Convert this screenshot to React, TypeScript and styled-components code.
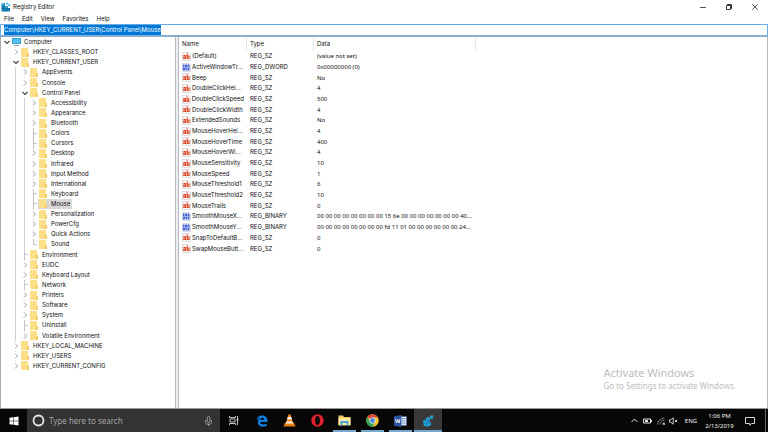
import React, { useEffect, useRef, useState } from "react";
import styled, { createGlobalStyle, css } from "styled-components";

const uiFont = `Inter, "Open Sans", sans-serif`;
const textFont = `"Noto Sans", "Open Sans", sans-serif`;

const GlobalStyle = createGlobalStyle`
  *, *::before, *::after { box-sizing: border-box; }
  body { margin: 0; background: #fff; color: #101010; font: 6px/10px ${uiFont}; overflow: hidden; }
  button, input { font: inherit; color: inherit; border: 0; padding: 0; margin: 0; background: none; }
  svg { display: block; }
  ul { list-style: none; margin: 0; padding: 0; }
`;

const Desktop = styled.div`
  display: flex;
  flex-direction: column;
  height: 100vh;
`;

const Window = styled.main`
  position: relative;
  display: flex;
  flex: 1;
  flex-direction: column;
  min-height: 0;
  border-bottom: 1px solid #9a9a9a;
`;

const TitleBar = styled.header`
  display: flex;
  align-items: center;
  height: 13px;
  padding-left: 1px;
  gap: 2px;
`;

const Title = styled.h1`
  flex: 1;
  margin: 0;
  font: inherit;
`;

const WindowButtons = styled.div`
  display: flex;
`;

const WindowButton = styled.button`
  display: grid;
  place-items: center;
  width: 26px;
  height: 12px;
`;

const MenuBar = styled.nav`
  display: flex;
  align-items: center;
  height: 11px;
  padding-left: 4px;
  gap: 8px;
`;

const AddressBar = styled.div`
  display: flex;
  height: 13px;
  padding: 0 3px;
  align-items: center;
  border: 1px solid #6aaae2;
  border-bottom: 2px solid #86aed0;
`;

const AddressInput = styled.input`
  flex: 1;
  height: 10px;
  line-height: 10px;
  outline: none;
  &::selection {
    background: #0078d7;
    color: #fff;
  }
`;

const Panes = styled.div`
  display: flex;
  flex: 1;
  min-height: 0;
`;

const TreePane = styled.section`
  flex: 0 0 176px;
  overflow: hidden;
  border-left: 1px solid #a5a9b5;
  border-right: 1px solid #b4b7c0;
`;

const Splitter = styled.div`
  width: 2px;
  background: #ededf0;
`;

const ListPane = styled.section`
  flex: 1;
  min-width: 0;
  overflow: hidden;
  border-left: 1px solid #b4b7c0;
  border-right: 1px solid #b4b7c0;
`;

const Tree = styled.ul`
  display: grid;
  grid-auto-rows: 1fr;
  min-height: 334px;
  padding-left: 1px;
`;

const TreeRow = styled.li`
  display: flex;
  align-items: stretch;
`;

type GuideKind = "line" | "tee" | "corner" | "dots" | "none";

const guideStyles = {
  none: css``,
  line: css`
    background: linear-gradient(#d2d2d2, #d2d2d2) 4px 0 / 1px 100% no-repeat;
  `,
  tee: css`
    background:
      linear-gradient(#c4c4c4, #c4c4c4) 4px 0 / 1px 100% no-repeat,
      linear-gradient(#c4c4c4, #c4c4c4) 4px 50% / 4px 1px no-repeat;
  `,
  corner: css`
    background:
      linear-gradient(#c4c4c4, #c4c4c4) 4px 0 / 1px 50% no-repeat,
      linear-gradient(#c4c4c4, #c4c4c4) 4px 50% / 4px 1px no-repeat;
  `,
  dots: css`
    background: linear-gradient(#dcdcdc, #dcdcdc) 4px 0 / 1px 1px no-repeat;
  `,
};

const Guide = styled.span<{ $kind: GuideKind }>`
  display: grid;
  place-items: center;
  width: 9px;
  ${(p) => guideStyles[p.$kind]}
`;

const Toggle = styled.button`
  display: grid;
  place-items: center;
  width: 9px;
  height: 9px;
`;

const TreeNode = styled.button<{ $selected: boolean }>`
  display: flex;
  align-items: center;
  gap: 3px;
  padding: 0 2px 0 1px;
  white-space: nowrap;
  background: ${(p) => (p.$selected ? "#d9d9d9" : "transparent")};
`;

const NodeIcon = styled.span`
  display: flex;
  width: 9px;
`;

const ValueTable = styled.table`
  width: 297px;
  height: 217px;
  table-layout: fixed;
  border-collapse: separate;
  border-spacing: 0;
`;

const HeadCell = styled.th<{ $width: number }>`
  width: ${(p) => p.$width}px;
  height: 14px;
  padding: 0 3px;
  font-weight: 400;
  text-align: left;
  border-right: 1px solid #e6e6e6;
`;

const Cell = styled.td`
  padding: 0 3px;
  white-space: nowrap;
`;

const DataCell = styled(Cell)`
  font-family: ${textFont};
`;

const NameContent = styled.span`
  display: flex;
  align-items: center;
  gap: 1px;
`;

const Watermark = styled.aside`
  position: absolute;
  right: 32px;
  bottom: 17px;
  color: #bdbdbd;
  font: 8px/11px ${textFont};
`;

const WatermarkTitle = styled.strong`
  display: block;
  font-weight: 400;
  font-size: 11px;
  line-height: 14px;
`;

const Taskbar = styled.footer`
  display: flex;
  height: 23px;
  background: #070707;
  color: #f2f2f2;
`;

const StartButton = styled.button`
  display: grid;
  place-items: center;
  width: 27px;
`;

const SearchBox = styled.label`
  display: flex;
  align-items: center;
  width: 193px;
  padding: 0 8px 0 5px;
  gap: 4px;
  background: #333;
`;

const SearchInput = styled.input`
  flex: 1;
  min-width: 0;
  font: 8px/12px ${textFont};
  outline: none;
  &::placeholder {
    color: #a6a6a6;
    opacity: 1;
  }
`;

const TaskButton = styled.button`
  display: grid;
  place-items: center;
  width: 28px;
`;

const Apps = styled.div`
  display: grid;
  grid-template-columns: repeat(7, 1fr);
  width: 194px;
`;

const AppButton = styled.button<{ $state: "idle" | "open" | "active" }>`
  display: grid;
  place-items: center;
  background-color: ${(p) => (p.$state === "active" ? "#383838" : "transparent")};
  background-image: ${(p) => (p.$state === "idle" ? "none" : "linear-gradient(#76a9d0, #76a9d0)")};
  background-repeat: no-repeat;
  background-position: center bottom;
  background-size: ${(p) => (p.$state === "active" ? "100%" : "23px")} 2px;
`;

const Tray = styled.div`
  display: flex;
  align-items: center;
  margin-left: auto;
  font-family: ${textFont};
`;

const TrayButton = styled.button`
  display: grid;
  place-items: center;
  width: 13px;
  height: 23px;
`;

const Language = styled(TrayButton)`
  width: 22px;
`;

const Clock = styled.button`
  width: 35px;
  line-height: 10px;
  text-align: center;
`;

const ActionCenter = styled(TrayButton)`
  width: 25px;
  margin-right: 3px;
`;

const ShowDesktop = styled.button`
  width: 3px;
  height: 23px;
  border-left: 1px solid #6a6a6a;
`;

/* ---------- icons ---------- */

const RegistryIcon = ({ size = 10, dark = false }: { size?: number; dark?: boolean }) => (
  <svg width={size} height={size} viewBox="0 0 20 20" aria-hidden="true">
    {dark ? (
      <>
        <path d="M2 9l5-2 4 2v4l4-1v5l-6 3-6-3z" fill="#1786bd" />
        <path d="M2 9l5 2v8l-4-2zM9 12l6-1v5l-6 3z" fill="#29a9e0" />
        <path d="M7 5l3-2 3 2v4l-3 1-3-1zM13 2l4-2 2 3-2 4-3-1z" fill="#2cb2e8" />
        <path d="M10 5v5M2 13l5 2M9 15l6-2M14 3l4 1" stroke="#0b5d8c" strokeWidth="1" />
      </>
    ) : (
      <>
        <path d="M1 3h7v5h5v4h5v7H1z" fill="#1583b8" />
        <path d="M1 3h7v5H1zM8 8h5v5H8z" fill="#3db0dc" />
        <path d="M1 8h7M1 13h17M7 3v16M12.500 8v11" stroke="#0b618f" />
        <path d="M10 2l4-1 1 4-4 1zM15 4l4 1-1 4-4-1z" fill="#4fc3ea" />
      </>
    )}
  </svg>
);

const FolderIcon = () => (
  <svg width="8" height="9" viewBox="0 0 8 9" aria-hidden="true">
    <path d="M0 0h7v5h1v4H0z" fill="#fcdf86" />
    <path d="M6 5h2v4H6z" fill="#f2cd68" />
  </svg>
);

const ComputerIcon = () => (
  <svg width="9" height="8" viewBox="0 0 9 8" aria-hidden="true">
    <path d="M0 0h9v6H0z" fill="#3d9fd3" />
    <path d="M1 1h7v4H1z" fill="#53c0f0" />
    <path d="M2 7h5v1H2z" fill="#8aa7b8" />
  </svg>
);

const Chevron = ({ open }: { open: boolean }) => (
  <svg width="6" height="6" viewBox="0 0 6 6" fill="none" aria-hidden="true">
    {open ? (
      <path d="M.5 2L3 4.500 5.500 2" stroke="#444" strokeWidth="1.100" />
    ) : (
      <path d="M2 .5L4.500 3 2 5.500" stroke="#9c9c9c" />
    )}
  </svg>
);

const ValueIcon = ({ binary }: { binary: boolean }) => (
  <svg width="9" height="9" viewBox="0 0 18 18" fill="none" aria-hidden="true">
    <path d="M1 1h13l3 3v13H1z" fill="#fbfbfb" stroke="#cfcfcf" strokeWidth="1.500" />
    {binary ? (
      <g fill="#3f63dc">
        <path d="M2 3h3v5H2zM6 3h4v5H6zM11 3h4v5h-4zM2 10h4v5H2zM7 10h3v5H7zM11 10h4v5h-4z" />
        <path d="M1 8h15v2H1z" opacity=".5" />
      </g>
    ) : (
      <g stroke="#e2482a" strokeWidth="2.400">
        <path d="M2.500 7H7v6H3.500v-3H7M10.500 3v10H14V8h-3.500" />
      </g>
    )}
  </svg>
);

const WindowsLogo = () => (
  <svg width="10" height="10" viewBox="0 0 20 20" fill="#fff" aria-hidden="true">
    <path d="M1 3.500l7.500-1v7H1zM9.500 2.300L19 1v8.500H9.500zM1 10.500h7.500v7L1 16.500zM9.500 10.500H19V19l-9.500-1.300z" />
  </svg>
);

const CortanaIcon = () => (
  <svg width="13" height="13" viewBox="0 0 13 13" fill="none" aria-hidden="true">
    <circle cx="6.500" cy="6.500" r="5" stroke="#e6e6e6" strokeWidth="1.800" />
  </svg>
);

const MicIcon = () => (
  <svg width="7" height="10" viewBox="0 0 7 10" fill="none" stroke="#a9a9a9" strokeWidth=".9" aria-hidden="true">
    <rect x="2.200" y=".5" width="2.600" height="6" rx="1.200" />
    <path d="M.6 4v2.500c0 1 .8 1.700 1.700 1.700h2.400c1 0 1.700-.7 1.700-1.700V4M3.500 8.200V10" />
  </svg>
);

const TaskViewIcon = () => (
  <svg width="10" height="9" viewBox="0 0 10 9" fill="none" stroke="#d8d8d8" aria-hidden="true">
    <path d="M.5 0v1.500h6V0M.5 9V7.500h6V9M1 3h5v3H1zM8.500 0v9" strokeWidth=".9" />
    <path d="M7.700 3.500h1.600" strokeWidth="2" />
  </svg>
);

const EdgeIcon = () => (
  <svg width="12" height="12" viewBox="0 0 24 24" aria-hidden="true">
    <path
      d="M1 11C2 4 6.500 1 12 1c7 0 11 5 11 10v3H8.500c.3 3.500 3.200 5 6.500 5 2.500 0 4.500-.6 6.500-1.800v4.500C19.500 23 17 23.500 14 23.500 7.500 23.500 3.500 20 3.500 14.500c0-4 2-7 5.500-8.500C6 6.300 3 8 1 11zm7.500-1.500h8C16.500 7 15 5.500 12.700 5.500S9 7 8.500 9.500z"
      fill="#0f7fe0"
    />
  </svg>
);

const VlcIcon = () => (
  <svg width="13" height="13" viewBox="0 0 26 26" aria-hidden="true">
    <path d="M4 17h18l3 8H1z" fill="#e07b12" />
    <path d="M11 1h4l6 20H5z" fill="#f28c1c" />
    <path d="M9.500 6h7l1.500 5H8zM6.800 15h12.400l1 4H5.600z" fill="#f2f0ec" />
  </svg>
);

const OperaIcon = () => (
  <svg width="13" height="13" viewBox="0 0 26 26" aria-hidden="true">
    <path
      fillRule="evenodd"
      d="M13 .5a12.500 12.500 0 100 25 12.500 12.500 0 000-25zM13 4c3 0 4.800 4 4.800 9S16 22 13 22s-4.800-4-4.800-9S10 4 13 4z"
      fill="#e0202d"
    />
  </svg>
);

const ExplorerIcon = () => (
  <svg width="13" height="11" viewBox="0 0 26 22" aria-hidden="true">
    <path d="M1 1h9l2 3h13v17H1z" fill="#f4cf62" />
    <path d="M1 6h24v14H1z" fill="#ffe79b" />
    <path d="M5 12h16v9h-4v-5H9v5H5z" fill="#45a9df" />
  </svg>
);

const ChromeIcon = () => (
  <svg width="13" height="13" viewBox="0 0 26 26" aria-hidden="true">
    <circle cx="13" cy="13" r="12.500" fill="#f5c52c" />
    <path d="M13 13L2.200 6.700A12.500 12.500 0 0123.800 6.800H13z" fill="#dd4b3e" />
    <path d="M2.200 6.700A12.500 12.500 0 0012.500 25.500L18 16l-5-3-4 2z" fill="#2fa35a" />
    <circle cx="13" cy="13" r="6.200" fill="#f4f4f4" />
    <circle cx="13" cy="13" r="4.800" fill="#4a86e8" />
  </svg>
);

const WordIcon = () => (
  <svg width="13" height="12" viewBox="0 0 26 24" fill="none" aria-hidden="true">
    <path d="M13 3h12v18H13z" fill="#f1f4fa" stroke="#3a62ae" />
    <path d="M16 7h7M16 10.500h7M16 14h7M16 17.500h7" stroke="#5b7fc0" strokeWidth="1.500" />
    <path d="M0 2.500L15 0v24L0 21.500z" fill="#2a56a2" />
    <path d="M3 8l2 8 2.500-7 2.500 7 2-8" stroke="#fff" strokeWidth="1.800" />
  </svg>
);

const BatteryIcon = () => (
  <svg width="9" height="6" viewBox="0 0 9 6" fill="none" aria-hidden="true">
    <path d="M.5 1h7v4h-7z" stroke="#e6e6e6" />
    <path d="M2 2h3v2H2zM8 2h1v2H8z" fill="#e6e6e6" />
  </svg>
);

const WifiIcon = () => (
  <svg width="8" height="8" viewBox="0 0 8 8" fill="none" aria-hidden="true">
    <path d="M.5 7.500A7 7 0 017.500 1M2.700 7.500A5 5 0 017.500 3.200M5 7.500A3 3 0 017.500 5.500" stroke="#9d9d9d" strokeWidth=".8" />
    <circle cx="7" cy="7" r="1" fill="#d8d8d8" />
  </svg>
);

const MutedIcon = () => (
  <svg width="9" height="8" viewBox="0 0 9 8" fill="none" stroke="#dedede" strokeWidth=".9" aria-hidden="true">
    <path d="M.5 2.800h1.300L4.200.8v6.400L1.800 5.200H.5zM5.800 2.800l2.400 2.400M8.200 2.800L5.800 5.200" />
  </svg>
);

const UpIcon = () => (
  <svg width="7" height="5" viewBox="0 0 7 5" fill="none" aria-hidden="true">
    <path d="M.5 4L3.500 1l3 3" stroke="#e6e6e6" />
  </svg>
);

const NotificationIcon = () => (
  <svg width="10" height="10" viewBox="0 0 10 10" fill="none" aria-hidden="true">
    <path d="M.5 1.500h9v6H6.500L4.800 9.300V7.500H.5z" stroke="#ececec" strokeWidth=".9" />
  </svg>
);

/* ---------- data ---------- */

interface Key {
  name: string;
  level: number;
  state?: "open" | "closed";
}

const branch = (level: number, spec: string): Key[] =>
  spec.split(",").map((part) => {
    const mark = part[0];
    const state = mark === "+" ? "closed" : mark === "-" ? "open" : undefined;
    return { name: state ? part.slice(1) : part, level, state };
  });

const keys: Key[] = [
  ...branch(0, "-Computer"),
  ...branch(1, "+HKEY_CLASSES_ROOT,-HKEY_CURRENT_USER"),
  ...branch(2, "+AppEvents,+Console,-Control Panel"),
  ...branch(
    3,
    "+Accessibility,+Appearance,+Bluetooth,Colors,Cursors,+Desktop,+Infrared,+Input Method,+International,Keyboard,Mouse,+Personalization,+PowerCfg,+Quick Actions,Sound",
  ),
  ...branch(2, "Environment,+EUDC,+Keyboard Layout,Network,+Printers,+Software,+System,Uninstall,+Volatile Environment"),
  ...branch(1, "+HKEY_LOCAL_MACHINE,+HKEY_USERS,+HKEY_CURRENT_CONFIG"),
];

const values: [string, string, string][] = [
  ["(Default)", "REG_SZ", "(value not set)"],
  ["ActiveWindowTr...", "REG_DWORD", "0x00000000 (0)"],
  ["Beep", "REG_SZ", "No"],
  ["DoubleClickHei...", "REG_SZ", "4"],
  ["DoubleClickSpeed", "REG_SZ", "500"],
  ["DoubleClickWidth", "REG_SZ", "4"],
  ["ExtendedSounds", "REG_SZ", "No"],
  ["MouseHoverHei...", "REG_SZ", "4"],
  ["MouseHoverTime", "REG_SZ", "400"],
  ["MouseHoverWi...", "REG_SZ", "4"],
  ["MouseSensitivity", "REG_SZ", "10"],
  ["MouseSpeed", "REG_SZ", "1"],
  ["MouseThreshold1", "REG_SZ", "6"],
  ["MouseThreshold2", "REG_SZ", "10"],
  ["MouseTrails", "REG_SZ", "0"],
  ["SmoothMouseX...", "REG_BINARY", "00 00 00 00 00 00 00 00 15 6e 00 00 00 00 00 00 00 40..."],
  ["SmoothMouseY...", "REG_BINARY", "00 00 00 00 00 00 00 00 fd 11 01 00 00 00 00 00 00 24..."],
  ["SnapToDefaultB...", "REG_SZ", "0"],
  ["SwapMouseButt...", "REG_SZ", "0"],
];

const apps: { name: string; icon: React.ReactNode; state: "idle" | "open" | "active" }[] = [
  { name: "Microsoft Edge", icon: <EdgeIcon />, state: "idle" },
  { name: "VLC media player", icon: <VlcIcon />, state: "idle" },
  { name: "Opera", icon: <OperaIcon />, state: "idle" },
  { name: "File Explorer", icon: <ExplorerIcon />, state: "open" },
  { name: "Google Chrome", icon: <ChromeIcon />, state: "open" },
  { name: "Word", icon: <WordIcon />, state: "open" },
  { name: "Registry Editor", icon: <RegistryIcon size={12} dark />, state: "active" },
];

/* True when a later sibling exists at the given level below row `index`. */
const continues = (index: number, level: number) => {
  for (let i = index + 1; i < keys.length; i++) {
    if (keys[i].level < level) return false;
    if (keys[i].level === level) return true;
  }
  return false;
};

const KeyRow = ({ index, selected, onSelect }: { index: number; selected: boolean; onSelect: () => void }) => {
  const { name, level, state } = keys[index];
  const leafKind: GuideKind = continues(index, level) ? "tee" : "corner";
  return (
    <TreeRow>
      {Array.from({ length: level }, (_, l) => (
        <Guide key={l} $kind={l > 0 && continues(index, l) ? "line" : "none"} />
      ))}
      <Guide $kind={state ? (level > 0 ? "dots" : "none") : leafKind}>
        {state && (
          <Toggle aria-label={`${state === "open" ? "Collapse" : "Expand"} ${name}`}>
            <Chevron open={state === "open"} />
          </Toggle>
        )}
      </Guide>
      <TreeNode $selected={selected} onClick={onSelect}>
        <NodeIcon>{level === 0 ? <ComputerIcon /> : <FolderIcon />}</NodeIcon>
        {name}
      </TreeNode>
    </TreeRow>
  );
};

export default function App() {
  const address = useRef<HTMLInputElement>(null);
  const [selectedKey, setSelectedKey] = useState("Mouse");

  useEffect(() => {
    address.current?.focus();
    address.current?.select();
  }, []);

  return (
    <Desktop>
      <GlobalStyle />
      <Window>
        <TitleBar>
          <RegistryIcon />
          <Title>Registry Editor</Title>
          <WindowButtons>
            <WindowButton aria-label="Minimize">
              <svg width="6" height="6" viewBox="0 0 6 6"><path d="M0 3h6v1H0z" fill="#555" /></svg>
            </WindowButton>
            <WindowButton aria-label="Restore">
              <svg width="6" height="6" viewBox="0 0 6 6" fill="none" stroke="#333">
                <path d="M.5 1.500h4v4h-4zM1.500 1.500v-1h4v4h-1" />
              </svg>
            </WindowButton>
            <WindowButton aria-label="Close">
              <svg width="6" height="6" viewBox="0 0 6 6" stroke="#444" strokeWidth=".9">
                <path d="M.3.300l5.400 5.400M5.700.300L.3 5.700" />
              </svg>
            </WindowButton>
          </WindowButtons>
        </TitleBar>
        <MenuBar>
          {["File", "Edit", "View", "Favorites", "Help"].map((item) => (
            <button key={item}>{item}</button>
          ))}
        </MenuBar>
        <AddressBar>
          <AddressInput
            ref={address}
            aria-label="Registry path"
            spellCheck={false}
            defaultValue={"Computer\\HKEY_CURRENT_USER\\Control Panel\\Mouse"}
          />
        </AddressBar>
        <Panes>
          <TreePane aria-label="Keys">
            <Tree>
              {keys.map((key, i) => (
                <KeyRow
                  key={key.name}
                  index={i}
                  selected={key.name === selectedKey}
                  onSelect={() => setSelectedKey(key.name)}
                />
              ))}
            </Tree>
          </TreePane>
          <Splitter />
          <ListPane aria-label="Values">
            <ValueTable>
              <thead>
                <tr>
                  <HeadCell $width={68}>Name</HeadCell>
                  <HeadCell $width={67}>Type</HeadCell>
                  <HeadCell $width={162}>Data</HeadCell>
                </tr>
              </thead>
              <tbody>
                {values.map(([name, type, data]) => (
                  <tr key={name}>
                    <Cell>
                      <NameContent>
                        <ValueIcon binary={type !== "REG_SZ"} />
                        {name}
                      </NameContent>
                    </Cell>
                    <Cell>{type}</Cell>
                    <DataCell>{data}</DataCell>
                  </tr>
                ))}
              </tbody>
            </ValueTable>
          </ListPane>
        </Panes>
        <Watermark>
          <WatermarkTitle>Activate Windows</WatermarkTitle>
          Go to Settings to activate Windows.
        </Watermark>
      </Window>
      <Taskbar>
        <StartButton aria-label="Start"><WindowsLogo /></StartButton>
        <SearchBox>
          <CortanaIcon />
          <SearchInput placeholder="Type here to search" aria-label="Search" />
          <MicIcon />
        </SearchBox>
        <TaskButton aria-label="Task view"><TaskViewIcon /></TaskButton>
        <Apps>
          {apps.map((app) => (
            <AppButton key={app.name} $state={app.state} aria-label={app.name}>
              {app.icon}
            </AppButton>
          ))}
        </Apps>
        <Tray>
          <TrayButton aria-label="Show hidden icons"><UpIcon /></TrayButton>
          <TrayButton aria-label="Battery"><BatteryIcon /></TrayButton>
          <TrayButton aria-label="Network"><WifiIcon /></TrayButton>
          <TrayButton aria-label="Volume muted"><MutedIcon /></TrayButton>
          <Language>ENG</Language>
          <Clock>
            1:06 PM
            <br />
            2/13/2019
          </Clock>
          <ActionCenter aria-label="Notifications"><NotificationIcon /></ActionCenter>
          <ShowDesktop aria-label="Show desktop" />
        </Tray>
      </Taskbar>
    </Desktop>
  );
}
